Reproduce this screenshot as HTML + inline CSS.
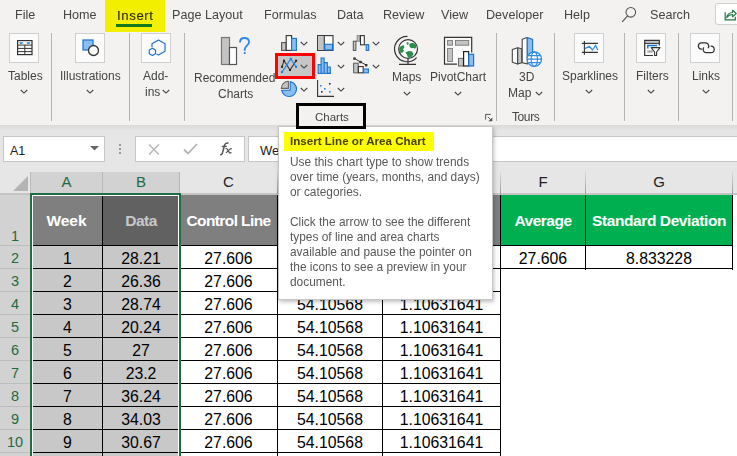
<!DOCTYPE html>
<html><head><meta charset="utf-8">
<style>
*{box-sizing:border-box;margin:0;padding:0}
html,body{width:737px;height:456px;overflow:hidden;background:#e6e6e6;font-family:"Liberation Sans",sans-serif;position:relative}
.a{position:absolute}
.t{position:absolute;white-space:nowrap;line-height:1}
#top{left:0;top:0;width:737px;height:125px;background:#f3f2f1;will-change:transform}
.tab{font-size:12.6px;color:#444;top:9px}
.rl{font-size:12px;color:#444}
.sep{position:absolute;width:1px;background:#b6b4b2;top:33px;height:88px}
.ibox{position:absolute;background:#fbfbfb;border:1px solid #d2d0ce;width:30px;height:30px;top:33px}
.chev{position:absolute;width:6px;height:6px;border-right:1.3px solid #555;border-bottom:1.3px solid #555;transform:rotate(45deg)}
.cell{position:absolute;font-size:15.5px;color:#111;text-align:center;line-height:1}
.hd{top:174px;font-size:15px;color:#222;text-align:center}
.rh{left:0;width:30px;text-align:center;font-size:14.5px;color:#1e6b41}
.h1{top:213px;font-size:15.5px;font-weight:bold;color:#fff;text-align:center}
.c{font-size:15.8px;color:#000;text-align:center}
.tip{font-size:11.9px;line-height:15px;color:#595959;white-space:nowrap}
</style></head><body>
<div id="top" class="a">
  <!-- tabs -->
  <div class="a" style="left:105px;top:0;width:60px;height:32px;background:#f2f000"></div>
  <div class="a" style="left:116px;top:24px;width:36px;height:3px;background:#137a1b"></div>
  <div class="t tab" style="left:15px">File</div>
  <div class="t tab" style="left:63px">Home</div>
  <div class="t tab" style="left:117px;top:9px;color:#2d2b00;font-size:13.2px;letter-spacing:0.6px;-webkit-text-stroke:0.1px #2d2b00">Insert</div>
  <div class="t tab" style="left:172px">Page Layout</div>
  <div class="t tab" style="left:264px">Formulas</div>
  <div class="t tab" style="left:337px">Data</div>
  <div class="t tab" style="left:383px">Review</div>
  <div class="t tab" style="left:441px">View</div>
  <div class="t tab" style="left:486px">Developer</div>
  <div class="t tab" style="left:564px">Help</div>
  <div class="t tab" style="left:650px">Search</div>

  <!-- share -->
  <div class="a" style="left:715px;top:3px;width:30px;height:22px;background:#fff;border:1px solid #d2d0ce;border-radius:3px"></div>
  <svg class="a" style="left:723px;top:7px" width="14" height="14" viewBox="0 0 14 14"><path d="M2.2 5.2V12.8H12.3V9.8" fill="none" stroke="#217346" stroke-width="1.2"/><path d="M3.6 10.6c0.6-3.2 2.8-5 6-5.1V3.2l3.6 3.3-3.6 3.3V7.5c-2.3 0-4.3 1-6 3.1z" fill="none" stroke="#217346" stroke-width="1.1" stroke-linejoin="round"/></svg>
  <!-- search icon -->
  <svg class="a" style="left:620px;top:5px" width="18" height="18" viewBox="0 0 18 18"><circle cx="10.8" cy="7.3" r="4.8" fill="none" stroke="#555" stroke-width="1.1"/><path d="M7.6 10.9L2.2 16.8" stroke="#555" stroke-width="1.2"/></svg>

  <!-- separators -->
  <div class="sep" style="left:51px"></div>
  <div class="sep" style="left:129px"></div>
  <div class="sep" style="left:184px"></div>
  <div class="sep" style="left:496px"></div>
  <div class="sep" style="left:554px"></div>
  <div class="sep" style="left:624px"></div>
  <div class="sep" style="left:678px"></div>
  <div class="sep" style="left:732px"></div>

  <!-- Tables -->
  <div class="ibox" style="left:9px"></div>
  <svg class="a" style="left:17px;top:40px" width="16" height="16" viewBox="0 0 16 16"><rect x="0.6" y="0.6" width="14.4" height="14" fill="#fff" stroke="#333" stroke-width="1.2"/><path d="M0.6 5.1h14.4M0.6 8.4h14.4M0.6 11.6h14.4M7.8 5.1v9.5" stroke="#333" stroke-width="1"/><path d="M2 2.3h4.2l-1.1 1.6h-2z M9.3 2.3h4.2l-1.1 1.6h-2z" fill="#2e8ae6"/></svg>
  <div class="t rl" style="left:8px;top:70px">Tables</div>

  <!-- Illustrations -->
  <div class="ibox" style="left:75px"></div>
  <svg class="a" style="left:82px;top:39px" width="18" height="18" viewBox="0 0 18 18"><rect x="1" y="1" width="10" height="10" fill="#8bbef0" stroke="#1a73d1" stroke-width="1.2"/><circle cx="11.5" cy="11.5" r="5" fill="#fbfbfb" stroke="#333" stroke-width="1.3"/></svg>
  <div class="t rl" style="left:60px;top:70px">Illustrations</div>

  <!-- Add-ins -->
  <div class="ibox" style="left:141px"></div>
  <svg class="a" style="left:146px;top:36px" width="24" height="22" viewBox="0 0 24 22"><path d="M6.00 11.20 L6.00 7.75 L12.50 4.00 L19.00 7.75 L19.00 15.25 L12.50 19.00 L10.60 17.90" fill="none" stroke="#1a73d1" stroke-width="1.2" stroke-linejoin="round"/><path d="M6.40 12.30 L9.52 14.10 L9.52 17.70 L6.40 19.50 L3.28 17.70 L3.28 14.10Z" fill="none" stroke="#1a73d1" stroke-width="1.2" stroke-linejoin="round"/></svg>
  <div class="t rl" style="left:143px;top:70px">Add-</div>
  <div class="t rl" style="left:145px;top:86px">ins</div>

  <!-- Recommended charts -->
  <svg class="a" style="left:220px;top:36px" width="32" height="30" viewBox="0 0 32 30"><rect x="1.5" y="1.5" width="8" height="27" fill="#c4c4c4" stroke="#777" stroke-width="1.2"/><rect x="9.5" y="11.5" width="7" height="17" fill="#fff" stroke="#555" stroke-width="1.2"/><path d="M20 6.5c0-3 2-4.5 4.5-4.5s4.5 1.5 4.5 4.2c0 3.3-4.3 3.6-4.3 7.3v1.2" fill="none" stroke="#2e8ae6" stroke-width="1.9"/><rect x="23.8" y="16" width="1.8" height="2" fill="#2e8ae6"/></svg>
  <div class="t rl" style="left:194px;top:72px">Recommended</div>
  <div class="t rl" style="left:218px;top:88px">Charts</div>

  <!-- Charts group -->
  <svg class="a" style="left:281px;top:35px" width="17" height="16" viewBox="0 0 17 16"><rect x="0.6" y="7.6" width="4.6" height="7.8" fill="#c4c4c4" stroke="#555" stroke-width="1.1"/><rect x="5.2" y="0.6" width="5.4" height="14.8" fill="#fff" stroke="#333" stroke-width="1.1"/><rect x="10.6" y="3.4" width="4.8" height="12" fill="#8bbef0" stroke="#1a73d1" stroke-width="1.1"/></svg>
  <svg class="a" style="left:317px;top:35px" width="17" height="16" viewBox="0 0 17 16"><rect x="0.6" y="0.6" width="15.4" height="14.8" fill="#fff" stroke="#333" stroke-width="1.1"/><rect x="1.2" y="1.2" width="5.8" height="13.6" fill="#c4c4c4"/><path d="M7.3 0.6v14.8" stroke="#333" stroke-width="1.1"/><rect x="7.8" y="9.3" width="7.7" height="5.6" fill="#8bbef0" stroke="#1a73d1" stroke-width="1.1"/></svg>
  <svg class="a" style="left:352px;top:35px" width="18" height="16" viewBox="0 0 18 16"><rect x="1.3" y="6.2" width="2.6" height="9.2" fill="#c4c4c4" stroke="#555" stroke-width="1"/><path d="M3.9 6.2H5.2" stroke="#555" stroke-width="1"/><rect x="5.2" y="0.6" width="2.6" height="5.6" fill="#c4c4c4" stroke="#888" stroke-width="1"/><rect x="8.5" y="0.6" width="3.8" height="9.2" fill="#fff" stroke="#333" stroke-width="1.1"/><path d="M12.3 9.7H14.2" stroke="#555" stroke-width="1"/><rect x="14.2" y="9.6" width="2.5" height="5.8" fill="#8bbef0" stroke="#1a73d1" stroke-width="1.1"/></svg>

  <div class="a" style="left:275px;top:53px;width:40px;height:26px;border:3.5px solid #ff0000;background:#c6c6c6"></div>
  <svg class="a" style="left:281px;top:57px" width="17" height="17" viewBox="0 0 17 17"><path d="M1 9.8L3 3.7 9 13 15.1 3.7" fill="none" stroke="#333" stroke-width="1.1"/><path d="M1 15.1L9.8 1.8 15.1 9.8" fill="none" stroke="#2e8ae6" stroke-width="1.2"/><g fill="#222"><rect x="0" y="8.8" width="2" height="2"/><rect x="2" y="2.7" width="2" height="2"/><rect x="8" y="12" width="2" height="2"/><rect x="14.1" y="2.7" width="2" height="2"/></g><g fill="#1a80e0"><rect x="0" y="14.1" width="2" height="2"/><rect x="8.8" y="0.8" width="2" height="2"/><rect x="14.1" y="8.8" width="2" height="2"/></g></svg>
  <svg class="a" style="left:317px;top:57px" width="15" height="17" viewBox="0 0 15 17"><path d="M1.1 16.4V7.6h3v8.8M4.1 16.4V1h3v15.4M7.1 16.4V5.6h3.2v10.8M10.3 16.4V10h3v6.4z" fill="#8bbef0" stroke="#1a73d1" stroke-width="1.1"/><path d="M0.6 16.4h13.2" stroke="#1a73d1" stroke-width="1.1"/></svg>
  <svg class="a" style="left:352px;top:57px" width="18" height="17" viewBox="0 0 18 17"><rect x="1.6" y="6.2" width="4.6" height="9.6" fill="#c4c4c4" stroke="#666" stroke-width="1.1"/><rect x="6.4" y="9.6" width="4.8" height="6.2" fill="#fff" stroke="#333" stroke-width="1.1"/><rect x="11.6" y="12" width="4.8" height="3.8" fill="#8bbef0" stroke="#1a73d1" stroke-width="1.1"/><path d="M2.5 1.5l6 3.5 6 3.2" fill="none" stroke="#333" stroke-width="1"/><rect x="1.3" y="0.4" width="2.4" height="2.4" fill="#333"/><rect x="7.3" y="3.8" width="2.4" height="2.4" fill="#333"/><rect x="13" y="7" width="2.4" height="2.4" fill="#333"/></svg>

  <svg class="a" style="left:276px;top:76px" width="24" height="24" viewBox="0 0 24 24"><path d="M12.4 5.3A7.3 7.3 0 0 0 5.3 12.4H12.4Z" fill="#c4c4c4" stroke="#666" stroke-width="1.1" stroke-linejoin="round"/><path d="M14.2 5.6A7.5 7.5 0 1 1 5.6 14.2H14.2Z" fill="#8bbef0" stroke="#1a73d1" stroke-width="1.1" stroke-linejoin="round"/></svg>
  <svg class="a" style="left:317px;top:80px" width="17" height="17" viewBox="0 0 17 17"><path d="M0.6 0v16.4H17" fill="none" stroke="#333" stroke-width="1.1"/><rect x="3" y="5" width="1.6" height="1.6" fill="#2e8ae6"/><rect x="7" y="8" width="1.6" height="1.6" fill="#2e8ae6"/><rect x="4" y="11" width="1.6" height="1.6" fill="#333"/><rect x="12" y="3" width="1.6" height="1.6" fill="#333"/><rect x="12" y="11" width="1.6" height="1.6" fill="#2e8ae6"/></svg>

  <svg class="a" style="left:484px;top:113px" width="10" height="10" viewBox="0 0 10 10"><path d="M1.6 6.6V1.4H6.7" fill="none" stroke="#555" stroke-width="1"/><path d="M8.3 4.4V8.3H4.4Z" fill="#555"/><path d="M3.8 3.8L7 7" stroke="#555" stroke-width="0.9"/></svg>

  <!-- Maps -->
  <svg class="a" style="left:394px;top:32px" width="30" height="36" viewBox="0 0 30 36"><path d="M13.5 4.3A12.7 12.7 0 1 0 22.6 25.6" fill="none" stroke="#333" stroke-width="1.2"/><circle cx="14.1" cy="17" r="9.4" fill="#fff" stroke="#333" stroke-width="1.2"/><path d="M5.3 16c1-2 3-3 4.5-2.8l0.6 2.3-1.5 1.8 1.2 1.5-1.5 1.6-1.8 0.6-1.6-1.4z" fill="#2a8f48"/><path d="M12.4 10.5l1.8-0.4 0.6 2-1.6 1z" fill="#2a8f48"/><path d="M15.2 12c1.5-1.5 4.5-1.5 6.5 0.5l0.8 2.8-1.5 1.5-1.8-0.8-2 0.3-1.6-1.5z" fill="#2a8f48"/><path d="M11.3 20.5l3.5-1.5 3.3 0.6 1.5 2.3-1.8 2.8-2.5 1.5-1.8-1.8-0.6-2z" fill="#2a8f48"/><path d="M14 26.5v5.6M5 32.3h17" stroke="#333" stroke-width="1.2"/></svg>
  <div class="t rl" style="left:392px;top:71px">Maps</div>

  <!-- PivotChart -->
  <svg class="a" style="left:440px;top:32px" width="40" height="38" viewBox="0 0 40 38"><path d="M17 32.2H4.5V5.4h27.2v15" fill="#fafafa" stroke="#333" stroke-width="1.2"/><rect x="7.6" y="8.4" width="4.8" height="4.8" fill="#c4c4c4" stroke="#777" stroke-width="0.9"/><rect x="15.5" y="8.4" width="13.2" height="4.8" fill="#c4c4c4" stroke="#777" stroke-width="0.9"/><rect x="7.6" y="16.4" width="4.8" height="13.1" fill="#c4c4c4" stroke="#777" stroke-width="0.9"/><rect x="18.5" y="26.4" width="4.8" height="7.6" fill="#c4c4c4" stroke="#666" stroke-width="1"/><rect x="23.6" y="19.6" width="5" height="14.4" fill="#fff" stroke="#222" stroke-width="1.2"/><rect x="28.8" y="22.3" width="4.8" height="11.7" fill="#8bbef0" stroke="#1a73d1" stroke-width="1.2"/></svg>
  <div class="t rl" style="left:430px;top:71px">PivotChart</div>

  <!-- 3D Map -->
  <svg class="a" style="left:506px;top:32px" width="40" height="38" viewBox="0 0 40 38"><path d="M6.3 17.5L11.7 15.8V32L6.3 30.2Z" fill="#fff" stroke="#444" stroke-width="1.1" stroke-linejoin="round"/><path d="M11.7 15.8L15.8 16.8V30.8L11.7 32Z" fill="#c8c8c8" stroke="#444" stroke-width="1.1" stroke-linejoin="round"/><path d="M16.2 7.3L21.3 5.6V32L16.2 30.6Z" fill="#fff" stroke="#444" stroke-width="1.1" stroke-linejoin="round"/><path d="M21.3 5.6L26.6 7.2V24L21.3 26Z" fill="#8bbef0" stroke="#1a73d1" stroke-width="1.1" stroke-linejoin="round"/><circle cx="28.3" cy="27.1" r="7.2" fill="#fff" stroke="#2e8ae6" stroke-width="1.3"/><path d="M21.5 27.1h13.6M22.5 23.6h11.6M22.5 30.6h11.6" stroke="#2e8ae6" stroke-width="1.1"/><ellipse cx="28.3" cy="27.1" rx="3.2" ry="7.2" fill="none" stroke="#2e8ae6" stroke-width="1.1"/></svg>
  <div class="t rl" style="left:519px;top:71px">3D</div>
  <div class="t rl" style="left:508px;top:87px">Map</div>
  <div class="t rl" style="left:512px;top:111px;letter-spacing:-0.4px">Tours</div>

  <!-- Sparklines -->
  <div class="ibox" style="left:574px"></div>
  <svg class="a" style="left:574px;top:33px" width="30" height="30" viewBox="0 0 30 30"><path d="M10.4 7.9v13.8M7.9 10.4h16M7.9 19.4h16" stroke="#333" stroke-width="1.1"/><path d="M10.9 15.6L15.4 13.3l3 3.7 3.2-4.6 2.2 4.5" fill="none" stroke="#2e8ae6" stroke-width="1.2"/></svg>
  <div class="t rl" style="left:562px;top:70px">Sparklines</div>

  <!-- Filters -->
  <div class="ibox" style="left:636px"></div>
  <svg class="a" style="left:636px;top:33px" width="30" height="30" viewBox="0 0 30 30"><rect x="9" y="7.5" width="14" height="2.6" fill="#c4c4c4"/><path d="M17 22.5H8.7V7.4h14.6v5" fill="none" stroke="#333" stroke-width="1.2"/><path d="M8.7 10.4h14.6" stroke="#333" stroke-width="1"/><path d="M11.8 15.5v-3h9.4" fill="none" stroke="#1a73d1" stroke-width="1.5"/><rect x="11.3" y="17.4" width="5.5" height="2.3" fill="#aaa"/><path d="M15.2 14.6h8.8l-3.4 4.4v3.5h-2v-3.5z" fill="#fff" stroke="#333" stroke-width="1.1" stroke-linejoin="round"/></svg>
  <div class="t rl" style="left:636px;top:70px">Filters</div>

  <!-- Links -->
  <div class="ibox" style="left:690px"></div>
  <svg class="a" style="left:690px;top:33px" width="30" height="30" viewBox="0 0 30 30"><path d="M12.2 16.2H11a3.2 3.2 0 0 1 0-6.3h4.6a3.2 3.2 0 0 1 2.4 5.3" fill="none" stroke="#333" stroke-width="1.25"/><path d="M20.6 13.2H21a3.2 3.2 0 0 1 0 6.4h-4.8a3.2 3.2 0 0 1-2.3-5.3" fill="none" stroke="#333" stroke-width="1.25"/></svg>
  <div class="t rl" style="left:692px;top:70px">Links</div>
<svg class="a" style="left:20px;top:89px" width="8" height="5" viewBox="0 0 8 5"><path d="M0.8 1L4 4.1 7.2 1" fill="none" stroke="#444" stroke-width="1.1"/></svg>
<svg class="a" style="left:86px;top:89px" width="8" height="5" viewBox="0 0 8 5"><path d="M0.8 1L4 4.1 7.2 1" fill="none" stroke="#444" stroke-width="1.1"/></svg>
<svg class="a" style="left:162px;top:89px" width="8" height="5" viewBox="0 0 8 5"><path d="M0.8 1L4 4.1 7.2 1" fill="none" stroke="#444" stroke-width="1.1"/></svg>
<svg class="a" style="left:300px;top:41px" width="8" height="5" viewBox="0 0 8 5"><path d="M0.8 1L4 4.1 7.2 1" fill="none" stroke="#444" stroke-width="1.1"/></svg>
<svg class="a" style="left:337px;top:41px" width="8" height="5" viewBox="0 0 8 5"><path d="M0.8 1L4 4.1 7.2 1" fill="none" stroke="#444" stroke-width="1.1"/></svg>
<svg class="a" style="left:372px;top:41px" width="8" height="5" viewBox="0 0 8 5"><path d="M0.8 1L4 4.1 7.2 1" fill="none" stroke="#444" stroke-width="1.1"/></svg>
<svg class="a" style="left:300px;top:64px" width="8" height="5" viewBox="0 0 8 5"><path d="M0.8 1L4 4.1 7.2 1" fill="none" stroke="#444" stroke-width="1.1"/></svg>
<svg class="a" style="left:337px;top:64px" width="8" height="5" viewBox="0 0 8 5"><path d="M0.8 1L4 4.1 7.2 1" fill="none" stroke="#444" stroke-width="1.1"/></svg>
<svg class="a" style="left:372px;top:64px" width="8" height="5" viewBox="0 0 8 5"><path d="M0.8 1L4 4.1 7.2 1" fill="none" stroke="#444" stroke-width="1.1"/></svg>
<svg class="a" style="left:300px;top:87px" width="8" height="5" viewBox="0 0 8 5"><path d="M0.8 1L4 4.1 7.2 1" fill="none" stroke="#444" stroke-width="1.1"/></svg>
<svg class="a" style="left:337px;top:87px" width="8" height="5" viewBox="0 0 8 5"><path d="M0.8 1L4 4.1 7.2 1" fill="none" stroke="#444" stroke-width="1.1"/></svg>
<svg class="a" style="left:403px;top:91px" width="8" height="5" viewBox="0 0 8 5"><path d="M0.8 1L4 4.1 7.2 1" fill="none" stroke="#444" stroke-width="1.1"/></svg>
<svg class="a" style="left:454px;top:91px" width="8" height="5" viewBox="0 0 8 5"><path d="M0.8 1L4 4.1 7.2 1" fill="none" stroke="#444" stroke-width="1.1"/></svg>
<svg class="a" style="left:535px;top:91px" width="8" height="5" viewBox="0 0 8 5"><path d="M0.8 1L4 4.1 7.2 1" fill="none" stroke="#444" stroke-width="1.1"/></svg>
<svg class="a" style="left:585px;top:89px" width="8" height="5" viewBox="0 0 8 5"><path d="M0.8 1L4 4.1 7.2 1" fill="none" stroke="#444" stroke-width="1.1"/></svg>
<svg class="a" style="left:647px;top:89px" width="8" height="5" viewBox="0 0 8 5"><path d="M0.8 1L4 4.1 7.2 1" fill="none" stroke="#444" stroke-width="1.1"/></svg>
<svg class="a" style="left:702px;top:89px" width="8" height="5" viewBox="0 0 8 5"><path d="M0.8 1L4 4.1 7.2 1" fill="none" stroke="#444" stroke-width="1.1"/></svg>
</div>
<div class="a" style="left:0;top:125px;width:737px;height:6px;background:linear-gradient(#d9d9d9,#e6e6e6)"></div>

<!-- formula bar -->
<div class="a" style="left:3px;top:136px;width:102px;height:26px;background:#fff;border:1px solid #c6c6c6"></div>
<div class="t" style="left:10px;top:145px;font-size:12.5px;color:#222">A1</div>
<svg class="a" style="left:90px;top:146px" width="9" height="5" viewBox="0 0 9 5"><path d="M0 0h9L4.5 4.5z" fill="#666"/></svg>
<div class="a" style="left:119px;top:144px;width:2px;height:2px;background:#999"></div>
<div class="a" style="left:119px;top:148px;width:2px;height:2px;background:#999"></div>
<div class="a" style="left:119px;top:152px;width:2px;height:2px;background:#999"></div>
<div class="a" style="left:135px;top:136px;width:110px;height:26px;background:#fff;border:1px solid #c6c6c6"></div>
<svg class="a" style="left:148px;top:144px" width="12" height="11" viewBox="0 0 12 11"><path d="M1 0.5l10 10M11 0.5l-10 10" stroke="#b4b4b4" stroke-width="1.4"/></svg>
<svg class="a" style="left:183px;top:143px" width="15" height="12" viewBox="0 0 15 12"><path d="M1 6.5l4 4 9-9.5" fill="none" stroke="#b4b4b4" stroke-width="1.8"/></svg>
<svg class="a" style="left:219px;top:142px" width="14" height="14" viewBox="0 0 14 14"><path d="M1 12.6c1.2 0.4 2-0.2 2.5-1.8L5.6 3C6.2 1.2 7.2 0.6 9.5 1.2" fill="none" stroke="#555" stroke-width="1.5"/><path d="M2.8 4.4h5" stroke="#555" stroke-width="1.3"/><path d="M6.5 6.8c1.2-0.6 1.8 0 2.6 1.6l1.2 2.2c0.5 0.6 1 0.4 2.2 0M12.8 6.6l-1.5 0.2L7 10.9" fill="none" stroke="#555" stroke-width="1.2"/></svg>
<div class="a" style="left:248px;top:136px;width:489px;height:26px;background:#fff;border:1px solid #c6c6c6;border-right:none"></div>
<div class="t" style="left:260px;top:144px;font-size:13px;color:#222">Week</div>

<!-- column headers -->
<div class="a" style="left:0;top:172px;width:737px;height:22px;background:#e6e6e6"></div>
<svg class="a" style="left:13px;top:176px" width="16" height="15" viewBox="0 0 16 15"><path d="M15 0V15H0z" fill="#b4b4b4"/></svg>
<div class="a" style="left:31px;top:172px;width:149px;height:21px;background:#d2d2d2"></div>
<div class="a" style="left:0;top:193px;width:737px;height:2px;background:#c4c4c4"></div>
<div class="a" style="left:30px;top:172px;width:1px;height:22px;background:#bdbdbd"></div>
<div class="a" style="left:102px;top:172px;width:1px;height:22px;background:#b8b8b8"></div>
<div class="a" style="left:179px;top:172px;width:1px;height:22px;background:#b8b8b8"></div>
<div class="a" style="left:277px;top:172px;width:1px;height:22px;background:linear-gradient(#dadada,#9a9a9a)"></div>
<div class="a" style="left:382px;top:172px;width:1px;height:22px;background:linear-gradient(#dadada,#9a9a9a)"></div>
<div class="a" style="left:500px;top:172px;width:1px;height:22px;background:linear-gradient(#dadada,#9a9a9a)"></div>
<div class="a" style="left:585px;top:172px;width:1px;height:22px;background:linear-gradient(#dadada,#9a9a9a)"></div>
<div class="a" style="left:732px;top:172px;width:1px;height:22px;background:linear-gradient(#dadada,#9a9a9a)"></div>
<div class="t hd" style="left:31px;width:71px;color:#1e6b41">A</div>
<div class="t hd" style="left:103px;width:76px;color:#1e6b41">B</div>
<div class="t hd" style="left:180px;width:97px">C</div>
<div class="t hd" style="left:501px;width:84px">F</div>
<div class="t hd" style="left:586px;width:146px">G</div>

<!-- row headers -->
<div class="a" style="left:0;top:195px;width:30px;height:262px;background:#d2d2d2"></div>
<div class="t rh" style="top:229px">1</div>
<div class="a" style="left:0;top:245px;width:30px;height:1px;background:#bdbdbd"></div>
<div class="t rh" style="top:251px">2</div>
<div class="a" style="left:0;top:268px;width:30px;height:1px;background:#bdbdbd"></div>
<div class="t rh" style="top:274px">3</div>
<div class="a" style="left:0;top:291px;width:30px;height:1px;background:#bdbdbd"></div>
<div class="t rh" style="top:297px">4</div>
<div class="a" style="left:0;top:314px;width:30px;height:1px;background:#bdbdbd"></div>
<div class="t rh" style="top:320px">5</div>
<div class="a" style="left:0;top:337px;width:30px;height:1px;background:#bdbdbd"></div>
<div class="t rh" style="top:343px">6</div>
<div class="a" style="left:0;top:360px;width:30px;height:1px;background:#bdbdbd"></div>
<div class="t rh" style="top:366px">7</div>
<div class="a" style="left:0;top:383px;width:30px;height:1px;background:#bdbdbd"></div>
<div class="t rh" style="top:389px">8</div>
<div class="a" style="left:0;top:406px;width:30px;height:1px;background:#bdbdbd"></div>
<div class="t rh" style="top:412px">9</div>
<div class="a" style="left:0;top:429px;width:30px;height:1px;background:#bdbdbd"></div>
<div class="t rh" style="top:435px">10</div>
<div class="a" style="left:0;top:452px;width:30px;height:1px;background:#bdbdbd"></div>


<!-- cells area -->
<div class="a" style="left:31px;top:195px;width:706px;height:262px;background:#fff"></div>
<div class="a" style="left:31px;top:194px;width:71px;height:51px;background:#7f7f7f"></div>
<div class="a" style="left:102px;top:194px;width:78px;height:51px;background:#616161"></div>
<div class="a" style="left:180px;top:195px;width:320px;height:50px;background:#7f7f7f"></div>
<div class="a" style="left:500px;top:195px;width:232px;height:50px;background:#00b050"></div>
<div class="a" style="left:31px;top:245px;width:149px;height:211px;background:#c8c8c8"></div>
<div class="a" style="left:31px;top:245px;width:702px;height:1px;background:#000"></div>
<div class="a" style="left:31px;top:268px;width:702px;height:1px;background:#000"></div>
<div class="a" style="left:31px;top:291px;width:470px;height:1px;background:#000"></div>
<div class="a" style="left:31px;top:314px;width:470px;height:1px;background:#000"></div>
<div class="a" style="left:31px;top:337px;width:470px;height:1px;background:#000"></div>
<div class="a" style="left:31px;top:360px;width:470px;height:1px;background:#000"></div>
<div class="a" style="left:31px;top:383px;width:470px;height:1px;background:#000"></div>
<div class="a" style="left:31px;top:406px;width:470px;height:1px;background:#000"></div>
<div class="a" style="left:31px;top:429px;width:470px;height:1px;background:#000"></div>
<div class="a" style="left:31px;top:452px;width:470px;height:1px;background:#000"></div>
<div class="a" style="left:102px;top:194px;width:1px;height:262px;background:#000"></div>
<div class="a" style="left:179px;top:194px;width:1px;height:262px;background:#000"></div>
<div class="a" style="left:277px;top:195px;width:1px;height:261px;background:#000"></div>
<div class="a" style="left:382px;top:195px;width:1px;height:261px;background:#000"></div>
<div class="a" style="left:500px;top:195px;width:1px;height:261px;background:#000"></div>
<div class="a" style="left:585px;top:195px;width:1px;height:75px;background:#000"></div>
<div class="a" style="left:732px;top:195px;width:1px;height:75px;background:#000"></div>

<div class="t h1" style="left:31px;width:71px">Week</div>
<div class="t h1" style="left:103px;width:76px;color:#c8c8c8;letter-spacing:-0.5px">Data</div>
<div class="t h1" style="left:180px;width:97px;letter-spacing:-0.6px">Control Line</div>
<div class="t h1" style="left:501px;width:84px;letter-spacing:-0.5px">Average</div>
<div class="t h1" style="left:586px;width:146px;letter-spacing:-0.4px">Standard Deviation</div>
<div class="t c" style="top:251px;left:32px;width:71px">1</div><div class="t c" style="top:251px;left:103px;width:76px">28.21</div><div class="t c" style="top:251px;left:180px;width:97px">27.606</div><div class="t c" style="top:251px;left:278px;width:104px">54.10568</div><div class="t c" style="top:251px;left:383px;width:117px">1.10631641</div>
<div class="t c" style="top:274px;left:32px;width:71px">2</div><div class="t c" style="top:274px;left:103px;width:76px">26.36</div><div class="t c" style="top:274px;left:180px;width:97px">27.606</div><div class="t c" style="top:274px;left:278px;width:104px">54.10568</div><div class="t c" style="top:274px;left:383px;width:117px">1.10631641</div>
<div class="t c" style="top:297px;left:32px;width:71px">3</div><div class="t c" style="top:297px;left:103px;width:76px">28.74</div><div class="t c" style="top:297px;left:180px;width:97px">27.606</div><div class="t c" style="top:297px;left:278px;width:104px">54.10568</div><div class="t c" style="top:297px;left:383px;width:117px">1.10631641</div>
<div class="t c" style="top:320px;left:32px;width:71px">4</div><div class="t c" style="top:320px;left:103px;width:76px">20.24</div><div class="t c" style="top:320px;left:180px;width:97px">27.606</div><div class="t c" style="top:320px;left:278px;width:104px">54.10568</div><div class="t c" style="top:320px;left:383px;width:117px">1.10631641</div>
<div class="t c" style="top:343px;left:32px;width:71px">5</div><div class="t c" style="top:343px;left:103px;width:76px">27</div><div class="t c" style="top:343px;left:180px;width:97px">27.606</div><div class="t c" style="top:343px;left:278px;width:104px">54.10568</div><div class="t c" style="top:343px;left:383px;width:117px">1.10631641</div>
<div class="t c" style="top:366px;left:32px;width:71px">6</div><div class="t c" style="top:366px;left:103px;width:76px">23.2</div><div class="t c" style="top:366px;left:180px;width:97px">27.606</div><div class="t c" style="top:366px;left:278px;width:104px">54.10568</div><div class="t c" style="top:366px;left:383px;width:117px">1.10631641</div>
<div class="t c" style="top:389px;left:32px;width:71px">7</div><div class="t c" style="top:389px;left:103px;width:76px">36.24</div><div class="t c" style="top:389px;left:180px;width:97px">27.606</div><div class="t c" style="top:389px;left:278px;width:104px">54.10568</div><div class="t c" style="top:389px;left:383px;width:117px">1.10631641</div>
<div class="t c" style="top:412px;left:32px;width:71px">8</div><div class="t c" style="top:412px;left:103px;width:76px">34.03</div><div class="t c" style="top:412px;left:180px;width:97px">27.606</div><div class="t c" style="top:412px;left:278px;width:104px">54.10568</div><div class="t c" style="top:412px;left:383px;width:117px">1.10631641</div>
<div class="t c" style="top:435px;left:32px;width:71px">9</div><div class="t c" style="top:435px;left:103px;width:76px">30.67</div><div class="t c" style="top:435px;left:180px;width:97px">27.606</div><div class="t c" style="top:435px;left:278px;width:104px">54.10568</div><div class="t c" style="top:435px;left:383px;width:117px">1.10631641</div>
<div class="t c" style="top:251px;left:501px;width:84px">27.606</div><div class="t c" style="top:251px;left:586px;width:146px">8.833228</div>

<!-- selection border -->
<div class="a" style="left:30px;top:193px;width:151px;height:270px;border:2px solid #1d6f42"></div>
<div class="a" style="left:32px;top:195px;width:147px;height:270px;border:1px solid #fff"></div>

<!-- tooltip -->
<div class="a" style="left:278px;top:126px;width:215px;height:174px;background:#fff;border:1px solid #c6c6c6;box-shadow:1px 2px 4px rgba(0,0,0,0.25)"></div>
<div class="a" style="left:284px;top:132px;width:150px;height:19px;background:#ffff00"></div>
<div class="t" style="left:290px;top:135px;font-size:11.6px;font-weight:bold;color:#464000">Insert Line or Area Chart</div>
<div class="a tip" style="left:290px;top:155px">Use this chart type to show trends<br>over time (years, months, and days)<br>or categories.<br><br>Click the arrow to see the different<br>types of line and area charts<br>available and pause the pointer on<br>the icons to see a preview in your<br>document.</div>
<!-- Charts label box -->
  <div class="a" style="left:296px;top:103px;width:70px;height:26px;border:3px solid #000;background:#f3f2f1"></div>
  <div class="t rl" style="left:315px;top:112px;font-size:11.5px">Charts</div>
  </body></html>
